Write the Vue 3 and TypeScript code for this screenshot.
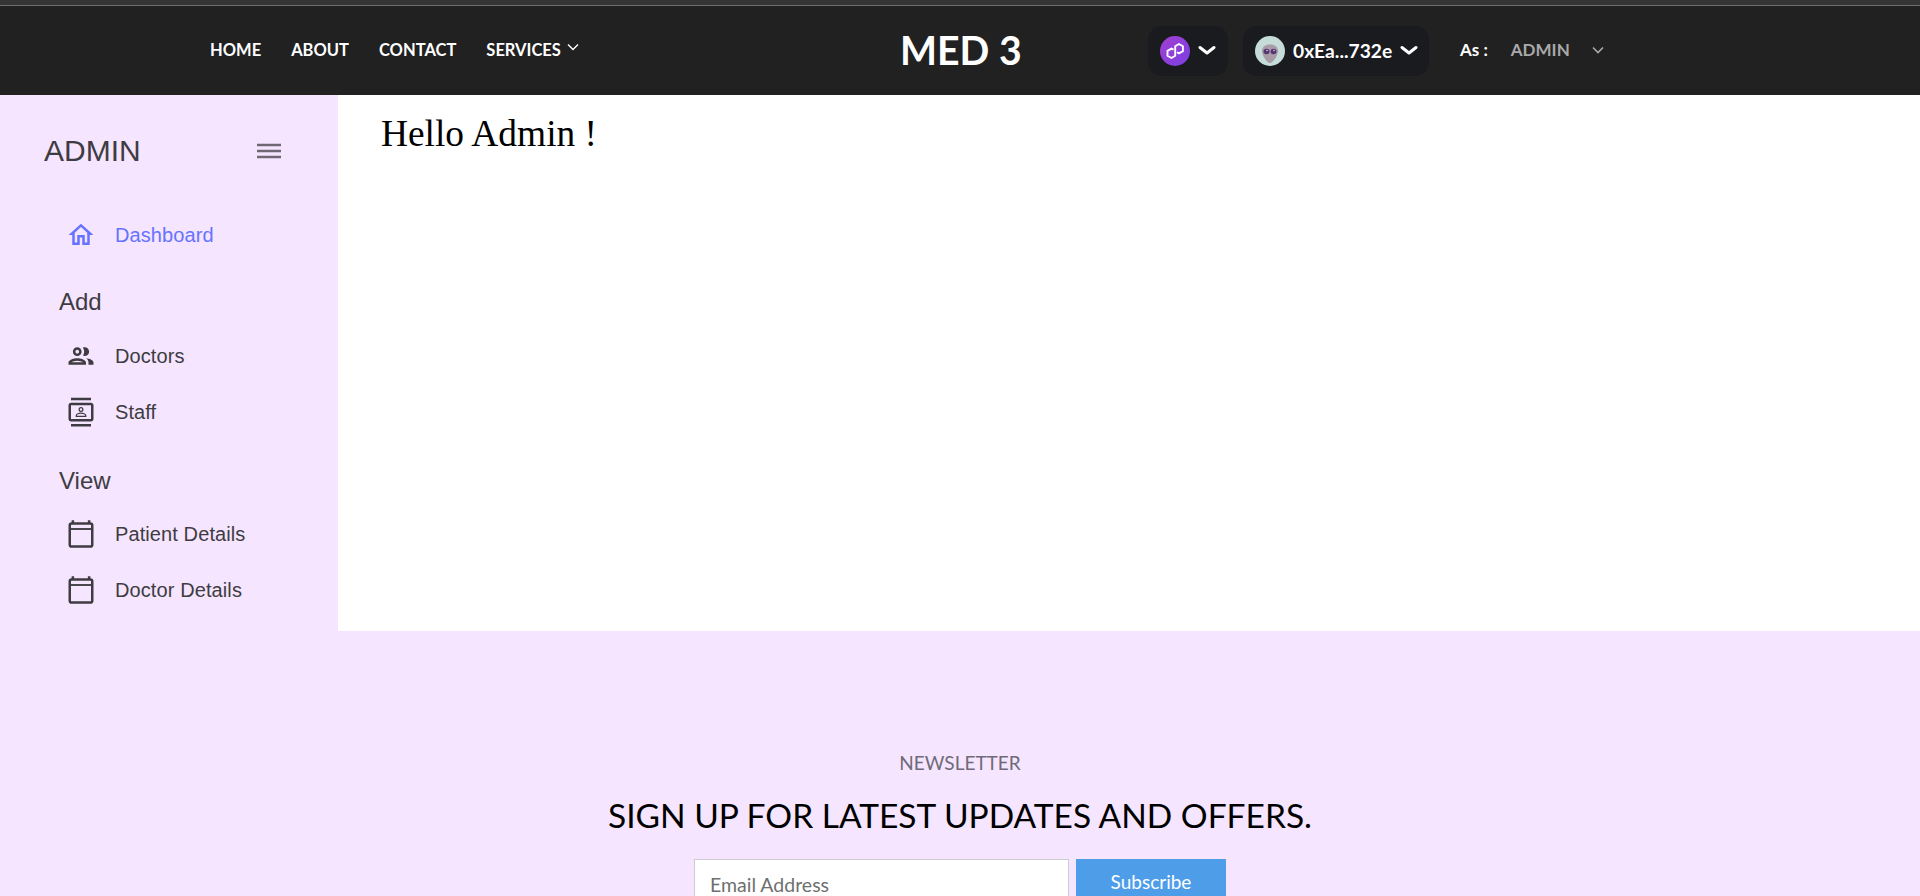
<script setup lang="ts">
const navLinks = ['HOME', 'ABOUT', 'CONTACT']
</script>

<template>
  <div class="page">
    <div class="topstrip"></div>
    <header class="header">
      <nav class="nav">
        <a v-for="l in navLinks" :key="l" class="navlink">{{ l }}</a>
        <a class="navlink services">SERVICES
          <svg class="svc-chev" viewBox="0 0 12 8" width="12" height="8"><path d="M1 1.5 6 6.5 11 1.5" fill="none" stroke="#fff" stroke-width="1.4"/></svg>
        </a>
      </nav>
      <div class="logo">MED 3</div>
      <div class="actions">
        <button class="wbtn chain">
          <span class="round poly">
            <svg viewBox="0 0 30 30" width="30" height="30"><path d="M13.5 13.7 11.5 12.6 7.5 14.9V19.7L11.5 22 15.2 19.7V10.3L18.9 8 22.9 10.3V15.1L18.9 17.4 17 16.3" fill="none" stroke="#fff" stroke-width="1.9"/></svg>
          </span>
          <svg class="wchev" viewBox="0 0 18 11" width="18" height="11"><path d="M2 2.5 9 8 16 2.5" fill="none" stroke="#fff" stroke-width="3" stroke-linecap="round" stroke-linejoin="round"/></svg>
        </button>
        <button class="wbtn account">
          <span class="round alien">
            <svg viewBox="0 0 30 30" width="30" height="30"><path d="M15 8.5c5 0 8 2.6 8 6.5 0 4.4-5 12-8 12s-8-7.600-8-12c0-3.900 3-6.500 8-6.500z" fill="#a99ca9"/><ellipse cx="11.500" cy="15.500" rx="3" ry="2.800" fill="#573773"/><ellipse cx="18.500" cy="15.500" rx="3" ry="2.800" fill="#573773"/><circle cx="12" cy="14.500" r=".8" fill="#d8c8e0"/><circle cx="19" cy="14.500" r=".8" fill="#d8c8e0"/></svg>
          </span>
          <span class="addr">0xEa...732e</span>
          <svg class="wchev" viewBox="0 0 18 11" width="18" height="11"><path d="M2 2.5 9 8 16 2.5" fill="none" stroke="#fff" stroke-width="3" stroke-linecap="round" stroke-linejoin="round"/></svg>
        </button>
        <span class="as">As :</span>
        <span class="role">ADMIN</span>
        <svg class="role-chev" viewBox="0 0 12 8" width="12" height="8"><path d="M1 1.5 6 6.5 11 1.5" fill="none" stroke="#a9a9a9" stroke-width="1.6"/></svg>
      </div>
    </header>

    <div class="body">
      <aside class="sidebar">
        <div class="side-head">
          <span class="side-title">ADMIN</span>
          <svg viewBox="0 0 24 16" width="24" height="16"><path d="M0 2h24M0 8h24M0 14h24" stroke="#6f6874" stroke-width="2.500"/></svg>
        </div>
        <a class="item active item-first">
          <svg viewBox="0 0 24 24" width="30" height="30"><path d="M12 5.690l5 4.500V18h-2v-6H9v6H7v-7.810l5-4.500M12 3 2 12h3v8h6v-6h2v6h6v-8h3L12 3z" fill="currentColor"/></svg>
          <span>Dashboard</span>
        </a>
        <h3 class="group group-add">Add</h3>
        <a class="item">
          <svg viewBox="0 0 24 24" width="30" height="30"><path d="M9 13.750c-2.340 0-7 1.170-7 3.500V19h14v-1.750c0-2.330-4.660-3.500-7-3.500zM4.340 17c.84-.58 2.870-1.250 4.660-1.250s3.820.67 4.660 1.250H4.340zM9 12c1.930 0 3.500-1.570 3.500-3.500S10.930 5 9 5 5.500 6.570 5.500 8.500 7.070 12 9 12zm0-5c.83 0 1.500.67 1.500 1.500S9.830 10 9 10s-1.500-.67-1.500-1.500S8.170 7 9 7zm7.040 6.810c1.160.84 1.960 1.960 1.960 3.440V19h4v-1.750c0-2.020-3.500-3.170-5.960-3.440zM15 12c1.930 0 3.500-1.570 3.500-3.500S16.930 5 15 5c-.54 0-1.040.13-1.500.35.63.89 1 1.980 1 3.150s-.37 2.260-1 3.150c.46.22.96.35 1.500.35z" fill="currentColor"/></svg>
          <span>Doctors</span>
        </a>
        <a class="item">
          <svg viewBox="0 0 24 24" width="30" height="30"><path d="M4 .5h16v2H4zM4 21.500h16v2H4zM20 4.500H4c-1.100 0-2 .9-2 2v11c0 1.100.9 2 2 2h16c1.100 0 2-.9 2-2v-11c0-1.100-.9-2-2-2zm0 13H4v-11h16v11z" fill="currentColor"/><circle cx="12" cy="10" r="1.500" fill="none" stroke="currentColor" stroke-width="1"/><path d="M8.200 15.500v-.6c0-1.300 2.300-2 3.800-2s3.800.7 3.800 2v.6z" fill="none" stroke="currentColor" stroke-width="1"/></svg>
          <span>Staff</span>
        </a>
        <h3 class="group group-view">View</h3>
        <a class="item">
          <svg viewBox="0 0 24 24" width="30" height="30"><path d="M5.500 1v3M18.500 1v3" stroke="currentColor" stroke-width="2" fill="none"/><rect x="3" y="3.500" width="18" height="18.500" rx="1.500" fill="none" stroke="currentColor" stroke-width="2"/><path d="M3 8h18" stroke="currentColor" stroke-width="1.500"/></svg>
          <span>Patient Details</span>
        </a>
        <a class="item">
          <svg viewBox="0 0 24 24" width="30" height="30"><path d="M5.500 1v3M18.500 1v3" stroke="currentColor" stroke-width="2" fill="none"/><rect x="3" y="3.500" width="18" height="18.500" rx="1.500" fill="none" stroke="currentColor" stroke-width="2"/><path d="M3 8h18" stroke="currentColor" stroke-width="1.500"/></svg>
          <span>Doctor Details</span>
        </a>
      </aside>
      <main class="main">
        <h1 class="hello">Hello Admin !</h1>
      </main>
    </div>

    <footer class="footer">
      <p class="eyebrow">NEWSLETTER</p>
      <h2 class="signup">SIGN UP FOR LATEST UPDATES AND OFFERS.</h2>
      <form class="subscribe" @submit.prevent>
        <input class="email" type="text" placeholder="Email Address" />
        <button class="sub-btn">Subscribe</button>
      </form>
    </footer>
  </div>
</template>

<style>
html, body { margin: 0; overflow: hidden; background: #f5e5fe; }
</style>

<style scoped>
.page { width: 1920px; height: 896px; overflow: hidden; display: flex; flex-direction: column; font-family: "Liberation Sans", Arial, sans-serif; }
.topstrip { height: 5px; background: #353535; border-bottom: 1px solid #6f6f6f; flex: none; }
.header { height: 89px; flex: none; background: #212121; display: grid; grid-template-columns: 690px 248px auto; align-items: center; padding-left: 210px; font-family: Lato, "Open Sans", sans-serif; color: #fff; }
.nav { display: flex; align-items: center; gap: 30px; padding-bottom: 2px; }
.navlink { font-size: 16.500px; font-weight: 700; color: #fff; white-space: nowrap; }
.services { display: flex; align-items: center; gap: 6px; }
.svc-chev { margin-bottom: 6px; }
.logo { font-size: 39.200px; font-weight: 700; line-height: 1; white-space: nowrap; margin-bottom: 2px; }
.actions { display: flex; align-items: center; }
.wbtn { height: 50px; background: #1a1b1f; border: none; border-radius: 14px; display: flex; align-items: center; padding: 0 11px 0 12px; color: #fff; font-family: inherit; }
.chain { width: 80px; }
.account { width: 186px; margin-left: 15px; }
.round { width: 30px; height: 30px; border-radius: 50%; display: block; flex: none; }
.poly { background: linear-gradient(135deg, #a13fd0, #7b3fe4); }
.alien { background: #c6dcd9; }
.wchev { margin-left: 8px; flex: none; }
.addr { font-size: 19.200px; font-weight: 700; margin-left: 8px; white-space: nowrap; }
.as { margin-left: 31px; font-size: 17px; font-weight: 700; margin-bottom: 2px; }
.role { margin-left: 23px; font-size: 17px; font-weight: 700; color: #a9a9a9; margin-bottom: 2px; }
.role-chev { margin-left: 22px; margin-bottom: 2px; }
.body { display: flex; height: 536px; flex: none; }
.sidebar { width: 338px; flex: none; background: #f5e5fe; padding: 36px 0 0 44px; box-sizing: border-box; color: #3e3c42; }
.side-head { display: flex; align-items: center; justify-content: space-between; width: 237px; height: 40px; }
.side-title { font-size: 30px; }
.item { display: flex; align-items: center; gap: 19px; height: 56px; padding-left: 22px; font-size: 20px; letter-spacing: .1px; }
.item svg { flex: none; }
.item-first { margin-top: 36px; }
.active { color: #6673ff; }
.group { margin: 0; padding-left: 15px; font-size: 24px; font-weight: 400; line-height: 28px; }
.group-add { margin-top: 25px; margin-bottom: 12px; }
.group-view { margin-top: 27px; margin-bottom: 11px; }
.main { flex: 1; background: #fff; padding: 18px 0 0 43px; }
.hello { margin: 0; font-family: "Liberation Serif", "Times New Roman", serif; font-weight: 400; font-size: 37.400px; line-height: 42px; color: #000; }
.footer { flex: 1; background: #f5e5fe; display: flex; flex-direction: column; align-items: center; padding-top: 121px; font-family: Lato, "Open Sans", sans-serif; }
.eyebrow { margin: 0; font-size: 19px; line-height: 22px; color: #6f6a78; }
.signup { margin: 21px 0 0; font-size: 33.500px; font-weight: 400; line-height: 40px; color: #000; white-space: nowrap; }
.subscribe { display: flex; gap: 7px; margin-top: 24px; flex: none; }
.email { width: 375px; height: 50px; box-sizing: border-box; border: 1px solid #cfcbd4; background: #fff; padding: 0 15px; font-family: inherit; font-size: 19.500px; outline: none; }
.email::placeholder { color: #6f6f6f; opacity: 1; }
.sub-btn { width: 150px; height: 45px; border: none; background: #4d9de9; color: #fff; font-family: inherit; font-size: 19px; }
</style>
